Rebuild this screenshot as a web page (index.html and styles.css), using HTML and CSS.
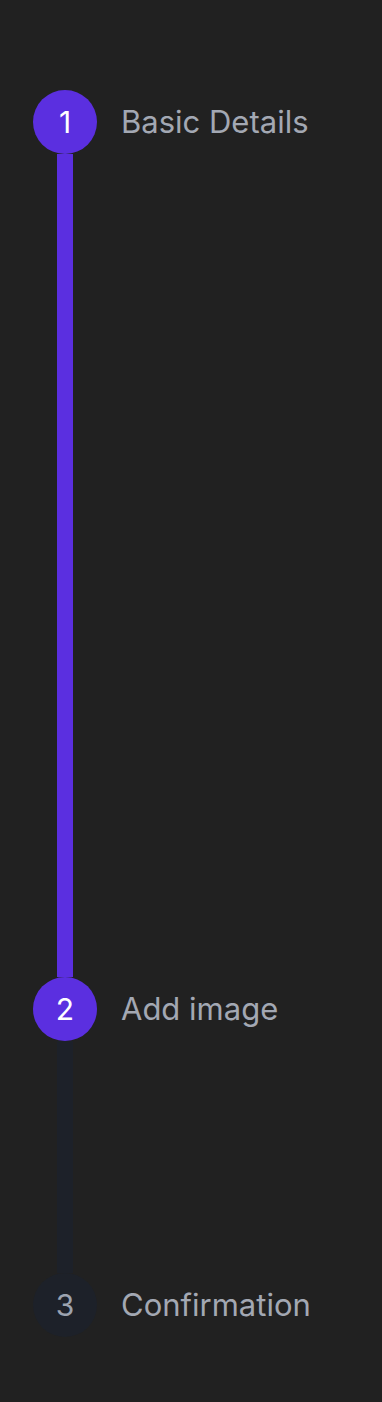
FILE: index.html
```html
<!DOCTYPE html>
<html lang="en">
<head>
<meta charset="utf-8">
<link rel="stylesheet" href="styles.css">
</head>
<body>
<ol class="stepper">
  <li class="step active">
    <div class="marker">
      <span class="circle">1</span>
      <span class="line line-active line-long"></span>
    </div>
    <span class="label">Basic Details</span>
  </li>
  <li class="step active">
    <div class="marker">
      <span class="circle">2</span>
      <span class="line line-short"></span>
    </div>
    <span class="label">Add image</span>
  </li>
  <li class="step">
    <div class="marker">
      <span class="circle">3</span>
    </div>
    <span class="label">Confirmation</span>
  </li>
</ol>
</body>
</html>
```

FILE: styles.css
```css
html, body {
  margin: 0;
  padding: 0;
  background: #212121;
  height: 100%;
}
body {
  font-family: Inter, "Noto Sans", "Liberation Sans", sans-serif;
}
.stepper {
  list-style: none;
  margin: 0;
  padding: 90px 0 0 33px;
  display: flex;
  flex-direction: column;
}
.step {
  display: flex;
  align-items: flex-start;
  gap: 24px;
}
.marker {
  display: flex;
  flex-direction: column;
  align-items: center;
  width: 64px;
}
.circle {
  width: 64px;
  height: 64px;
  border-radius: 50%;
  background: #1d2129;
  color: #9ca3af;
  font-size: 30px;
  display: flex;
  align-items: center;
  justify-content: center;
}
.active .circle {
  background: #5b2fe0;
  color: #ffffff;
}
.line {
  width: 16px;
  background: #1d2129;
}
.line-active {
  background: #5b2fe0;
}
.line-long {
  height: 823px;
}
.line-short {
  height: 232px;
}
.label {
  color: #a3a8b3;
  font-size: 31px;
  line-height: 64px;
}
```
